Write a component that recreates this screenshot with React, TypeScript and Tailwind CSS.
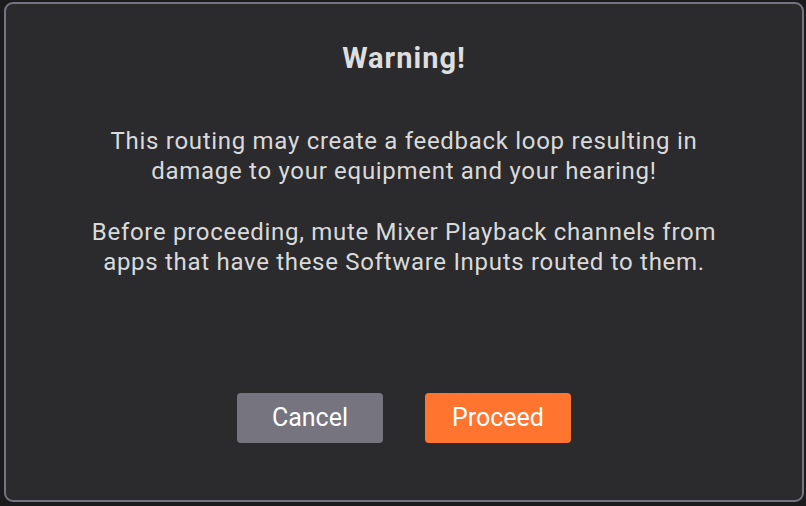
import React from 'react';

export default function App() {
  return (
    <div
      className="w-[806px] h-[506px] bg-[#1b1b1d] pt-[2px] pl-[4px] overflow-hidden"
      style={{ fontFamily: 'Roboto, "Liberation Sans", sans-serif' }}
    >
      <div className="w-[800px] h-[500px] rounded-[9px] border-2 border-[#75747f] bg-[#2b2b2d] flex flex-col items-center">
        {/* Title */}
        <h2 className="mt-[36px] text-[29px] leading-[36px] font-bold tracking-[1px] text-[#dedede]">Warning!</h2>

        {/* Message */}
        <div className="mt-[50px] text-center text-[24px] leading-[30px] tracking-[0.7px] text-[#dadada]">
          <p>
            This routing may create a feedback loop resulting in
            <br />
            damage to your equipment and your hearing!
          </p>
          <p className="mt-[31px]">
            Before proceeding, mute Mixer Playback channels from
            <br />
            apps that have these Software Inputs routed to them.
          </p>
        </div>

        {/* Actions */}
        <div className="mt-[116px] flex gap-[42px]">
          <button className="w-[146px] h-[50px] rounded-[4px] bg-[#75747f] text-white text-[25px]">
            Cancel
          </button>
          <button className="w-[146px] h-[50px] rounded-[4px] bg-[#ff7530] text-white text-[25px]">
            Proceed
          </button>
        </div>
      </div>
    </div>
  );
}
